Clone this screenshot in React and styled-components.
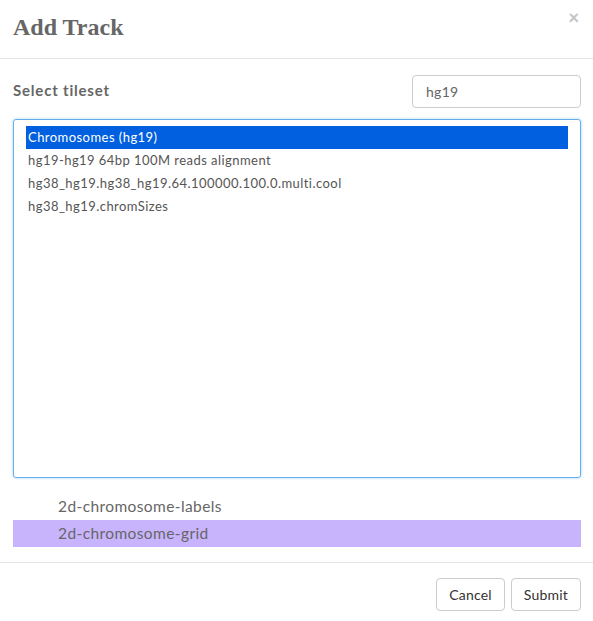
import React, { useState } from "react";
import styled, { createGlobalStyle } from "styled-components";

const GlobalStyle = createGlobalStyle`
  html, body {
    margin: 0;
    padding: 0;
    background: #fff;
  }
  body {
    font-family: Lato, "Open Sans", sans-serif;
    color: #666;
  }
`;

const tilesets = [
  "Chromosomes (hg19)",
  "hg19-hg19 64bp 100M reads alignment",
  "hg38_hg19.hg38_hg19.64.100000.100.0.multi.cool",
  "hg38_hg19.chromSizes",
];

const trackTypes = ["2d-chromosome-labels", "2d-chromosome-grid"];

const Modal = styled.div`
  width: 593px;
  height: 621px;
  display: flex;
  flex-direction: column;
  background: #fff;
`;

const Header = styled.div`
  height: 59px;
  box-sizing: border-box;
  border-bottom: 1px solid #e5e5e5;
  display: flex;
  justify-content: space-between;
  align-items: flex-start;
  padding: 12px 13px 0 13px;
`;

const Title = styled.h4`
  margin: 0;
  font-family: "Liberation Serif", serif;
  font-weight: bold;
  font-size: 24px;
  line-height: 30px;
  color: #666;
`;

const Close = styled.button`
  border: none;
  background: none;
  padding: 0;
  margin: 0 1px 0 0;
  font-family: "Liberation Sans", sans-serif;
  font-size: 18px;
  font-weight: bold;
  line-height: 13px;
  color: #c6c6c6;
  cursor: pointer;
`;

const Body = styled.div`
  padding: 16px 12px 0 13px;
  display: flex;
  flex-direction: column;
`;

const TopRow = styled.div`
  display: flex;
  justify-content: space-between;
  align-items: center;
  height: 33px;
`;

const Label = styled.label`
  font-weight: bold;
  font-size: 15px;
  letter-spacing: 0.8px;
  color: #666;
  margin-top: -3px;
`;

const Search = styled.input`
  width: 169px;
  height: 33px;
  box-sizing: border-box;
  border: 1px solid #ccc;
  border-radius: 4px;
  padding: 0 13px;
  font-family: inherit;
  font-size: 14px;
  letter-spacing: 0.3px;
  color: #666;
  outline: none;
`;

const ListBox = styled.div`
  margin-top: 11px;
  height: 359px;
  box-sizing: border-box;
  border: 1px solid #66afe9;
  border-radius: 3px;
  box-shadow: 0 0 3px rgba(102, 175, 233, 0.6);
  padding: 6px 12px;
`;

const Option = styled.div`
  height: 23px;
  line-height: 23px;
  padding: 0 2px;
  font-size: 13px;
  letter-spacing: 0.45px;
  white-space: nowrap;
  background: ${(p) => (p.$selected ? "#0060df" : "transparent")};
  color: ${(p) => (p.$selected ? "#fff" : "#555")};
`;

const TrackList = styled.div`
  margin-top: 15px;
  display: flex;
  flex-direction: column;
`;

const TrackRow = styled.div`
  height: 27px;
  line-height: 27px;
  padding-left: 45px;
  font-size: 15.5px;
  letter-spacing: 0.4px;
  color: #666;
  background: ${(p) => (p.$active ? "#c8b4fd" : "transparent")};
`;

const Footer = styled.div`
  margin-top: 15px;
  border-top: 1px solid #e5e5e5;
  padding: 15px 12px 0 0;
  display: flex;
  justify-content: flex-end;
  gap: 6px;
`;

const Button = styled.button`
  height: 33px;
  box-sizing: border-box;
  padding: 0 ${(p) => p.$pad}px;
  border: 1px solid #ccc;
  border-radius: 4px;
  background: #fff;
  font-family: inherit;
  font-size: 14px;
  letter-spacing: 0.2px;
  color: #333;
  cursor: pointer;
`;

export default function App() {
  const [selected, setSelected] = useState(0);
  const [track, setTrack] = useState(1);

  return (
    <Modal>
      <GlobalStyle />
      <Header>
        <Title>Add Track</Title>
        <Close aria-label="Close">×</Close>
      </Header>
      <Body>
        <TopRow>
          <Label>Select tileset</Label>
          <Search defaultValue="hg19" />
        </TopRow>
        <ListBox role="listbox">
          {tilesets.map((t, i) => (
            <Option
              key={t}
              $selected={i === selected}
              onClick={() => setSelected(i)}
            >
              {t}
            </Option>
          ))}
        </ListBox>
        <TrackList>
          {trackTypes.map((t, i) => (
            <TrackRow key={t} $active={i === track} onClick={() => setTrack(i)}>
              {t}
            </TrackRow>
          ))}
        </TrackList>
      </Body>
      <Footer>
        <Button $pad={12}>Cancel</Button>
        <Button $pad={12}>Submit</Button>
      </Footer>
    </Modal>
  );
}
